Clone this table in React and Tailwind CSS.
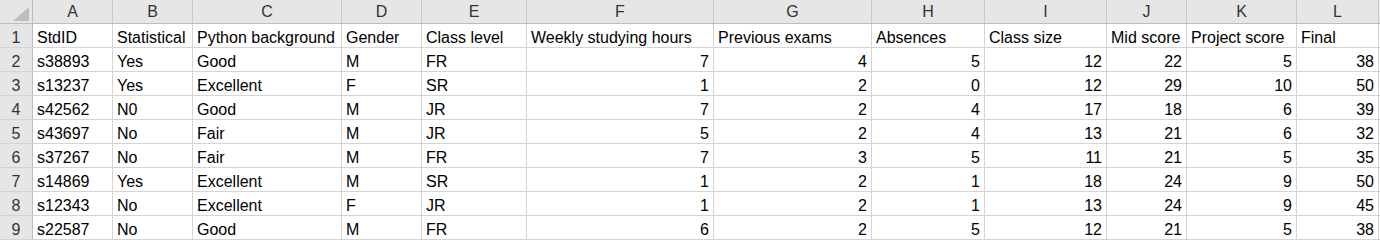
import React from 'react';

const COLS = [
  { key: 'A', w: 'w-[80px]' },
  { key: 'B', w: 'w-[80px]' },
  { key: 'C', w: 'w-[149px]' },
  { key: 'D', w: 'w-[80px]' },
  { key: 'E', w: 'w-[105px]' },
  { key: 'F', w: 'w-[187px]' },
  { key: 'G', w: 'w-[158px]' },
  { key: 'H', w: 'w-[113px]' },
  { key: 'I', w: 'w-[122px]' },
  { key: 'J', w: 'w-[80px]' },
  { key: 'K', w: 'w-[110px]' },
  { key: 'L', w: 'w-[82px]' },
];

const HEADERS = ['StdID', 'Statistical', 'Python background', 'Gender', 'Class level', 'Weekly studying hours', 'Previous exams', 'Absences', 'Class size', 'Mid score', 'Project score', 'Final'];

const ROWS = [
  ['s38893', 'Yes', 'Good', 'M', 'FR', 7, 4, 5, 12, 22, 5, 38],
  ['s13237', 'Yes', 'Excellent', 'F', 'SR', 1, 2, 0, 12, 29, 10, 50],
  ['s42562', 'N0', 'Good', 'M', 'JR', 7, 2, 4, 17, 18, 6, 39],
  ['s43697', 'No', 'Fair', 'M', 'JR', 5, 2, 4, 13, 21, 6, 32],
  ['s37267', 'No', 'Fair', 'M', 'FR', 7, 3, 5, 11, 21, 5, 35],
  ['s14869', 'Yes', 'Excellent', 'M', 'SR', 1, 2, 1, 18, 24, 9, 50],
  ['s12343', 'No', 'Excellent', 'F', 'JR', 1, 2, 1, 13, 24, 9, 45],
  ['s22587', 'No', 'Good', 'M', 'FR', 6, 2, 5, 12, 21, 5, 38],
];

const Cell = ({ w, value }) => {
  const isNum = typeof value === 'number';
  return (
    <div className={`${w} shrink-0 h-full border-r border-[#d4d4d4] flex items-end px-[4px] ${isNum ? 'justify-end' : 'justify-start'}`}>
      <span className="whitespace-nowrap leading-[18px]">{value}</span>
    </div>
  );
};

export default function App() {
  return (
    <div className="w-[1380px] h-[240px] overflow-hidden bg-white text-[16px] text-black" style={{ fontFamily: '"Liberation Sans", Arial, sans-serif' }}>
      {/* column letters */}
      <div className="flex h-[24px] bg-[#e6e6e6] border-b border-[#bdbdbd]">
        <div className="w-[33px] shrink-0 h-full border-r border-[#bdbdbd] relative">
          <svg width="16" height="14" viewBox="0 0 16 14" className="absolute right-[3px] bottom-[2px]">
            <polygon points="16,0 16,14 0,14" fill="#bdbdbd" />
          </svg>
        </div>
        {COLS.map((c) => (
          <div key={c.key} className={`${c.w} shrink-0 h-full border-r border-[#c8c8c8] flex items-center justify-center text-[#333]`}>
            {c.key}
          </div>
        ))}
        <div className="flex-1"></div>
      </div>

      {/* data rows */}
      {[HEADERS, ...ROWS].map((row, rIdx) => (
        <div key={rIdx} className="flex h-[24px] border-b border-[#d4d4d4]">
          <div className="w-[33px] shrink-0 h-full bg-[#e6e6e6] border-r border-[#bdbdbd] flex items-end justify-center text-[#333]">
            <span className="leading-[18px]">{rIdx + 1}</span>
          </div>
          {COLS.map((c, cIdx) => (
            <Cell key={c.key} w={c.w} value={row[cIdx]} />
          ))}
          <div className="flex-1"></div>
        </div>
      ))}
    </div>
  );
}
